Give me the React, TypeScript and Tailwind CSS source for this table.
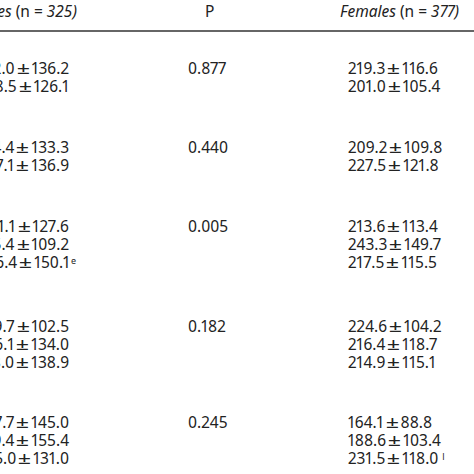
const groups = [
  {
    p: '0.877',
    males: [['212.0', '136.2'], ['218.5', '126.1']],
    females: [['219.3', '116.6'], ['201.0', '105.4']],
  },
  {
    p: '0.440',
    males: [['224.4', '133.3'], ['217.1', '136.9']],
    females: [['209.2', '109.8'], ['227.5', '121.8']],
  },
  {
    p: '0.005',
    males: [['211.1', '127.6'], ['215.4', '109.2'], ['236.4', '150.1', 'e']],
    females: [['213.6', '113.4'], ['243.3', '149.7'], ['217.5', '115.5']],
  },
  {
    p: '0.182',
    males: [['219.7', '102.5'], ['226.1', '134.0'], ['218.0', '138.9']],
    females: [['224.6', '104.2'], ['216.4', '118.7'], ['214.9', '115.1']],
  },
  {
    p: '0.245',
    males: [['207.7', '145.0'], ['229.4', '155.4'], ['225.0', '131.0']],
    females: [['164.1', '88.8'], ['188.6', '103.4'], ['231.5', '118.0', 'l']],
  },
]

const gaps = ['mt-[27px]', 'mt-[43px]', 'mt-[43px]', 'mt-[46px]', 'mt-[42px]']

function Value({ v }: { v: string[] }) {
  return (
    <div className="h-[18px] whitespace-nowrap">
      {v[0]}
      <span className="inline-block w-[17px] text-center">
        <span className="inline-block scale-x-150">±</span>
      </span>
      {v[1]}
      {v[2] === 'e' && <sup className="-mr-[7px] ml-[1px] text-[9px]">e</sup>}
      {v[2] === 'l' && <sup className="ml-[4px] text-[9px]">l</sup>}
    </div>
  )
}

export default function App() {
  return (
    <div
      className="h-[474px] w-[474px] overflow-hidden bg-white text-[15.5px] leading-[18px] text-[#222] proportional-nums"
      style={{ fontFamily: '"Noto Sans", "Open Sans", sans-serif' }}
    >
      <div className="flex pt-[2px]">
        <div className="-ml-[40px] w-[117px] shrink-0 whitespace-nowrap text-right">
          <i>Males</i> (n = <i>325)</i>
        </div>
        <div className="w-[263px] shrink-0 pl-[128px]">P</div>
        <div className="whitespace-nowrap">
          <i>Females</i> (n = <i>377)</i>
        </div>
      </div>
      <div className="mt-[10px] h-[2px] bg-[#666]" />

      {groups.map((g, i) => (
        <div key={i} className={`flex ${gaps[i]}`}>
          <div className="-ml-[40px] w-[109px] shrink-0 text-right">
            {g.males.map((v, j) => (
              <Value key={j} v={v} />
            ))}
          </div>
          <div className="w-[279px] shrink-0 pl-[119px]">{g.p}</div>
          <div>
            {g.females.map((v, j) => (
              <Value key={j} v={v} />
            ))}
          </div>
        </div>
      ))}
    </div>
  )
}
